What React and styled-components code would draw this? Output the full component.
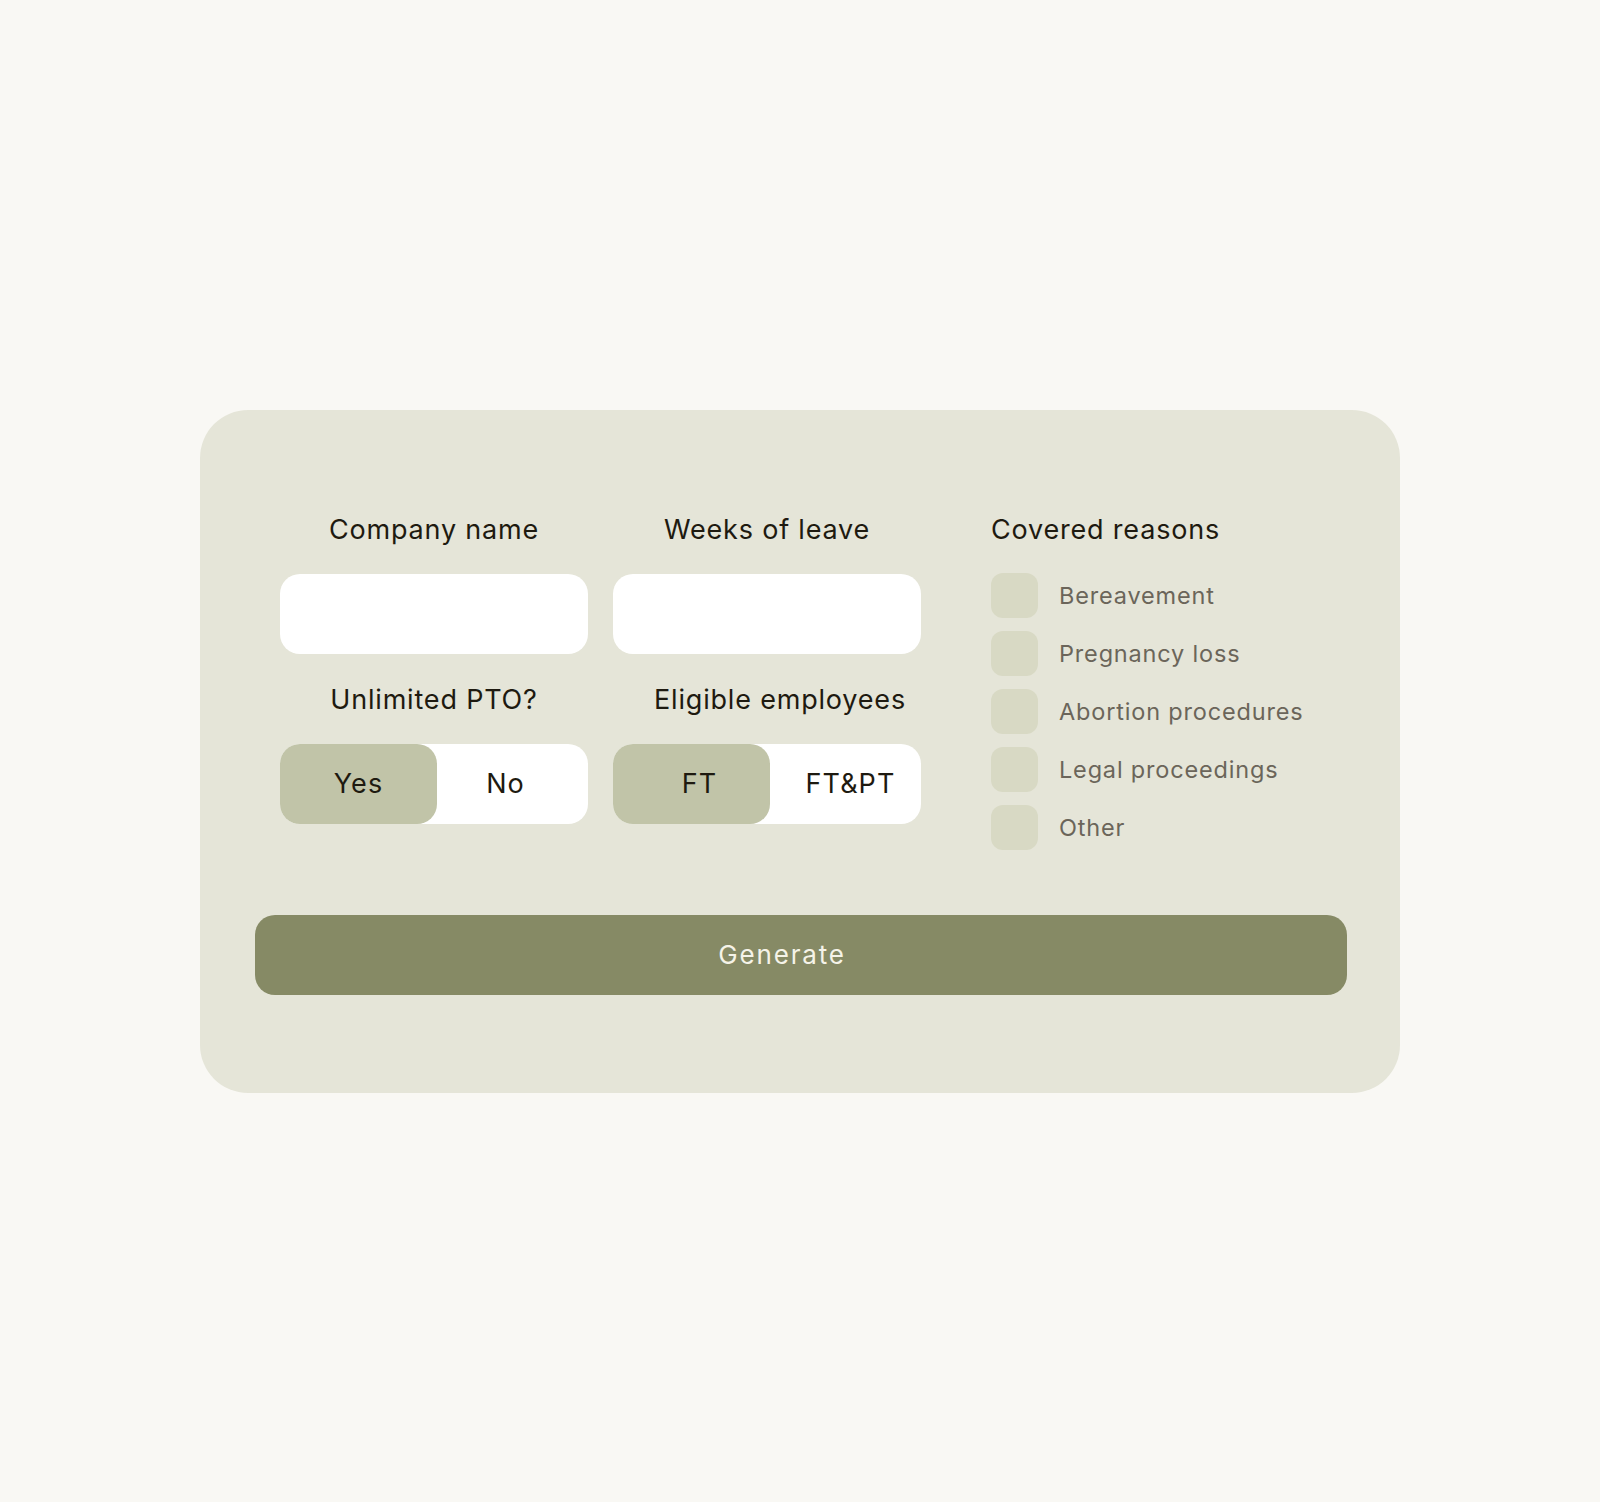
import React, { useState } from "react";
import styled, { createGlobalStyle } from "styled-components";

const GlobalStyle = createGlobalStyle`
  * {
    box-sizing: border-box;
  }

  body {
    margin: 0;
    background: #f9f8f4;
    font-family: "Inter", "Roboto", sans-serif;
    color: #1e1a10;
  }
`;

const Page = styled.main`
  min-height: 100vh;
  display: flex;
  align-items: center;
  justify-content: center;
`;

const Card = styled.form`
  width: 1200px;
  background: #e5e5d8;
  border-radius: 48px;
  padding: 104px 53px 98px 55px;
`;

const Fields = styled.div`
  display: flex;
  gap: 70px;
  padding: 0 27px 0 25px;
  margin-bottom: 65px;
`;

const Grid = styled.div`
  display: grid;
  grid-template-columns: 308px 308px;
  column-gap: 25px;
  align-content: start;
`;

const Label = styled.label`
  display: block;
  font-size: 27px;
  line-height: 32px;
  letter-spacing: 0.03em;
  font-weight: 400;
  text-align: ${(p) => (p.$left ? "left" : "center")};
  padding-left: ${(p) => p.$shift || 0}px;
  margin: ${(p) => (p.$first ? "0" : "30px")} 0 ${(p) => p.$gap || 28}px;
  white-space: nowrap;
`;

const Field = styled.div`
  display: flex;
  flex-direction: column;
`;

const TextInput = styled.input`
  height: 80px;
  width: 100%;
  border: none;
  border-radius: 20px;
  background: #ffffff;
  padding: 0 24px;
  font: inherit;
  font-size: 24px;
  outline: none;
`;

const Toggle = styled.div`
  height: 80px;
  display: flex;
  background: #ffffff;
  border-radius: 20px;
`;

const ToggleButton = styled.button`
  flex: ${(p) => (p.$active ? "0 0 157px" : "1")};
  border: none;
  border-radius: 20px;
  background: ${(p) => (p.$active ? "#c1c4a8" : "transparent")};
  font-family: inherit;
  font-size: 27px;
  letter-spacing: 0.04em;
  color: #1e1a10;
  cursor: pointer;
  padding: 0 ${(p) => (p.$nudge < 0 ? -p.$nudge * 2 : 0)}px 0
    ${(p) => (p.$nudge > 0 ? p.$nudge * 2 : 0)}px;
`;

const Reasons = styled.div`
  display: flex;
  flex-direction: column;
`;

const List = styled.div`
  display: flex;
  flex-direction: column;
  gap: 13px;
`;

const Option = styled.label`
  display: flex;
  align-items: center;
  gap: 21px;
  cursor: pointer;
  font-size: 23.5px;
  letter-spacing: 0.035em;
  color: #6b655a;
`;

const Box = styled.span`
  width: 47px;
  height: 45px;
  border-radius: 12px;
  background: ${(p) => (p.$checked ? "#a9ad8c" : "#d8d9c4")};
  flex-shrink: 0;
`;

const GenerateButton = styled.button`
  display: block;
  width: 100%;
  height: 80px;
  border: none;
  border-radius: 20px;
  background: #868a65;
  color: #f5f3e8;
  font-family: inherit;
  font-size: 26px;
  letter-spacing: 0.07em;
  padding: 0 38px 0 0;
  cursor: pointer;
`;

const reasons = [
  "Bereavement",
  "Pregnancy loss",
  "Abortion procedures",
  "Legal proceedings",
  "Other",
];

const App = () => {
  const [pto, setPto] = useState("yes");
  const [eligible, setEligible] = useState("ft");
  const [checked, setChecked] = useState({});

  return (
    <Page>
      <GlobalStyle />
      <Card onSubmit={(e) => e.preventDefault()}>
        <Fields>
          <Grid>
            <Field>
              <Label $first>Company name</Label>
              <TextInput />
            </Field>
            <Field>
              <Label $first>Weeks of leave</Label>
              <TextInput />
            </Field>
            <Field>
              <Label>Unlimited PTO?</Label>
              <Toggle>
                <ToggleButton
                  type="button"
                  $active={pto === "yes"}
                  onClick={() => setPto("yes")}
                >
                  Yes
                </ToggleButton>
                <ToggleButton
                  type="button"
                  $active={pto === "no"}
                  $nudge={-7}
                  onClick={() => setPto("no")}
                >
                  No
                </ToggleButton>
              </Toggle>
            </Field>
            <Field>
              <Label $shift={26}>Eligible employees</Label>
              <Toggle>
                <ToggleButton
                  type="button"
                  $active={eligible === "ft"}
                  $nudge={8}
                  onClick={() => setEligible("ft")}
                >
                  FT
                </ToggleButton>
                <ToggleButton
                  type="button"
                  $active={eligible === "all"}
                  $nudge={5}
                  onClick={() => setEligible("all")}
                >
                  FT&amp;PT
                </ToggleButton>
              </Toggle>
            </Field>
          </Grid>
          <Reasons>
            <Label $first $left $gap={27}>
              Covered reasons
            </Label>
            <List>
              {reasons.map((r) => (
                <Option
                  key={r}
                  onClick={() => setChecked({ ...checked, [r]: !checked[r] })}
                >
                  <Box $checked={checked[r]} />
                  {r}
                </Option>
              ))}
            </List>
          </Reasons>
        </Fields>
        <GenerateButton type="submit">Generate</GenerateButton>
      </Card>
    </Page>
  );
};

export default App;
